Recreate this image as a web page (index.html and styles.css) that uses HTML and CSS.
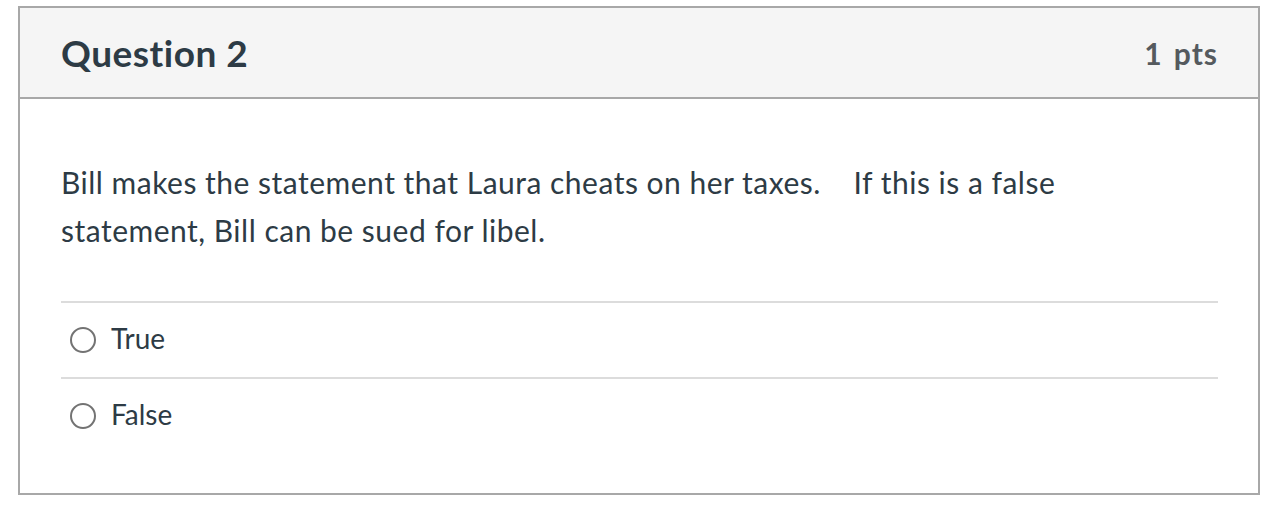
FILE: index.html
```html
<!DOCTYPE html>
<html lang="en">
<head>
<meta charset="utf-8">
<title>Question 2</title>
<link rel="stylesheet" href="styles.css">
</head>
<body>
<div class="question">
  <div class="q-header">
    <h2 class="q-title">Question 2</h2>
    <div class="q-points">1 pts</div>
  </div>
  <div class="q-body">
    <p class="q-text">Bill makes the statement that Laura cheats on her taxes.&nbsp;&nbsp;&nbsp; If this is a false statement, Bill can be sued for libel.</p>
    <div class="answers">
      <label class="answer"><span class="radio"></span><span class="answer-label">True</span></label>
      <label class="answer"><span class="radio"></span><span class="answer-label">False</span></label>
    </div>
  </div>
</div>
</body>
</html>
```
FILE: styles.css
```css
html, body {
  margin: 0;
  padding: 0;
  background: #ffffff;
}
body {
  font-family: Lato, "Liberation Sans", sans-serif;
  color: #2d3b45;
  padding: 6px 0 0 18px;
}
.question {
  width: 1242px;
  box-sizing: border-box;
  border: 2px solid #a8a8a8;
  background: #fff;
}
.q-header {
  display: flex;
  align-items: center;
  justify-content: space-between;
  height: 89px;
  padding: 0 40px 0 41px;
  background: #f5f5f5;
  border-bottom: 2px solid #a8a8a8;
}
.q-title {
  margin: 0;
  font-size: 37px;
  font-weight: 700;
  letter-spacing: 0.5px;
  color: #2d3b45;
}
.q-points {
  font-size: 30px;
  font-weight: 700;
  letter-spacing: 1px;
  word-spacing: 3px;
  color: #555a5e;
}
.q-body {
  padding: 59px 40px 40px 41px;
}
.q-text {
  margin: 0 0 47px 0;
  font-size: 30px;
  line-height: 48px;
  letter-spacing: 0.5px;
  width: 1040px;
}
.answers {
  display: flex;
  flex-direction: column;
}
.answer {
  display: flex;
  align-items: center;
  height: 74px;
  border-top: 2px solid #dcdcdc;
}
.radio {
  width: 22px;
  height: 22px;
  margin-left: 9px;
  margin-right: 15px;
  border: 2px solid #737373;
  border-radius: 50%;
  flex: none;
  background: #fff;
}
.answer-label {
  font-size: 28px;
  line-height: 34px;
  margin-bottom: 4px;
  color: #2d3b45;
}
```
